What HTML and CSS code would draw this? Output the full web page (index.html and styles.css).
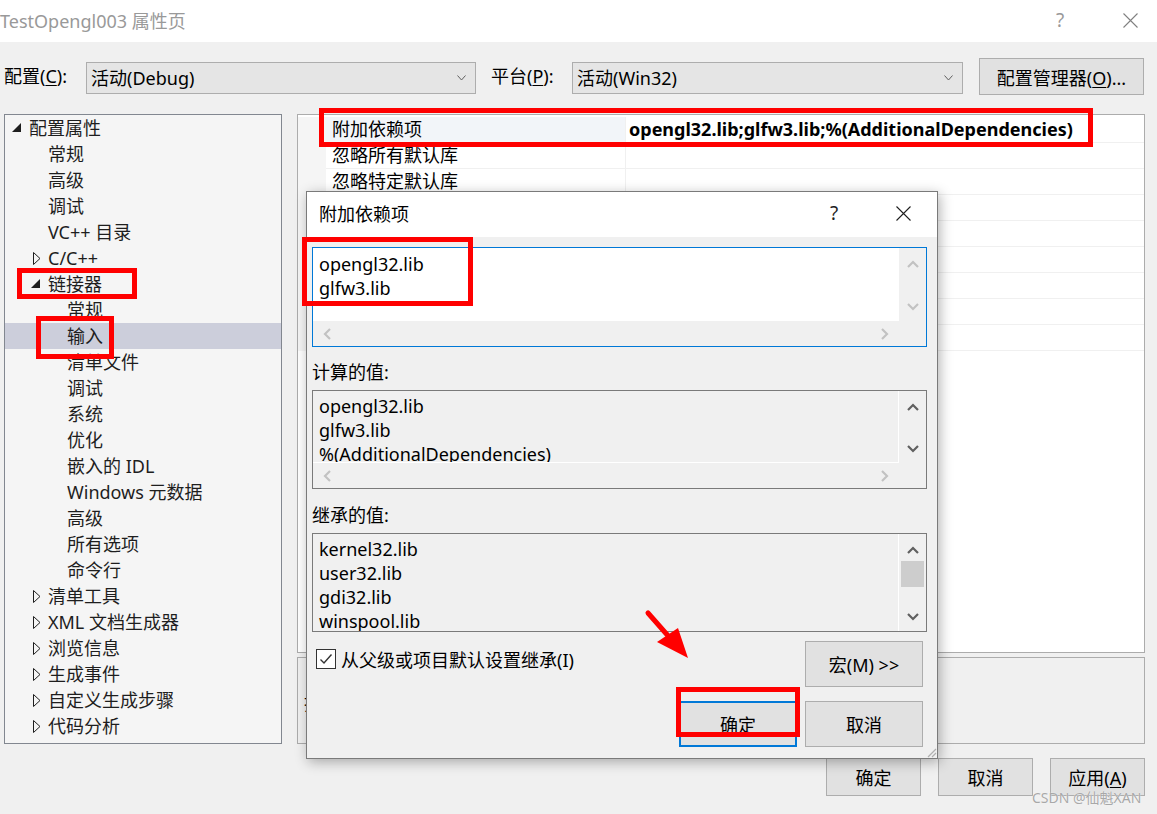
FILE: index.html
```html
<!DOCTYPE html>
<html lang="zh-CN">
<head>
    <meta charset="UTF-8">
    <title>TestOpengl003 属性页</title>
    <link rel="stylesheet" href="styles.css">
</head>
<body>
    <div class="titlebar">
        <span class="title">TestOpengl003 属性页</span>
        <span class="tb-help">?</span>
        <span class="tb-close">
            <svg width="15" height="15" viewBox="0 0 15 15"><path d="M0.5 0.5L14.5 14.5M14.5 0.5L0.5 14.5" stroke="#808080" stroke-width="1.1" fill="none"/></svg>
        </span>
    </div>

    <div class="config-row">
        <span class="cfg-label">配置(<u>C</u>):</span>
        <div class="combo combo-config">
            <span>活动(Debug)</span>
            <svg width="9" height="6" viewBox="0 0 9 6"><path d="M0.5 0.5L4.5 5L8.5 0.5" stroke="#606060" stroke-width="1" fill="none"/></svg>
        </div>
        <span class="cfg-label second">平台(<u>P</u>):</span>
        <div class="combo combo-platform">
            <span>活动(Win32)</span>
            <svg width="9" height="6" viewBox="0 0 9 6"><path d="M0.5 0.5L4.5 5L8.5 0.5" stroke="#606060" stroke-width="1" fill="none"/></svg>
        </div>
        <button class="btn btn-manager">配置管理器(<u>O</u>)...</button>
    </div>

    <div class="main">
        <div class="tree">
            <div class="row l0"><span class="exp"><svg width="9" height="9" viewBox="0 0 9 9"><polygon points="9,0 9,9 0,9" fill="#1e1e1e"/></svg></span>配置属性</div>
            <div class="row l1"><span class="exp"></span>常规</div>
            <div class="row l1"><span class="exp"></span>高级</div>
            <div class="row l1"><span class="exp"></span>调试</div>
            <div class="row l1"><span class="exp"></span>VC++ 目录</div>
            <div class="row l1"><span class="exp"><svg class="closed" width="8" height="13" viewBox="0 0 8 13"><polygon points="0.5,0.5 7,6.5 0.5,12.5" fill="none" stroke="#1e1e1e" stroke-width="1"/></svg></span>C/C++</div>
            <div class="row l1"><span class="exp"><svg width="9" height="9" viewBox="0 0 9 9"><polygon points="9,0 9,9 0,9" fill="#1e1e1e"/></svg></span>链接器</div>
            <div class="row l2"><span class="exp"></span>常规</div>
            <div class="row l2 selected"><span class="exp"></span>输入</div>
            <div class="row l2"><span class="exp"></span>清单文件</div>
            <div class="row l2"><span class="exp"></span>调试</div>
            <div class="row l2"><span class="exp"></span>系统</div>
            <div class="row l2"><span class="exp"></span>优化</div>
            <div class="row l2"><span class="exp"></span>嵌入的 IDL</div>
            <div class="row l2"><span class="exp"></span>Windows 元数据</div>
            <div class="row l2"><span class="exp"></span>高级</div>
            <div class="row l2"><span class="exp"></span>所有选项</div>
            <div class="row l2"><span class="exp"></span>命令行</div>
            <div class="row l1"><span class="exp"><svg class="closed" width="8" height="13" viewBox="0 0 8 13"><polygon points="0.5,0.5 7,6.5 0.5,12.5" fill="none" stroke="#1e1e1e" stroke-width="1"/></svg></span>清单工具</div>
            <div class="row l1"><span class="exp"><svg class="closed" width="8" height="13" viewBox="0 0 8 13"><polygon points="0.5,0.5 7,6.5 0.5,12.5" fill="none" stroke="#1e1e1e" stroke-width="1"/></svg></span>XML 文档生成器</div>
            <div class="row l1"><span class="exp"><svg class="closed" width="8" height="13" viewBox="0 0 8 13"><polygon points="0.5,0.5 7,6.5 0.5,12.5" fill="none" stroke="#1e1e1e" stroke-width="1"/></svg></span>浏览信息</div>
            <div class="row l1"><span class="exp"><svg class="closed" width="8" height="13" viewBox="0 0 8 13"><polygon points="0.5,0.5 7,6.5 0.5,12.5" fill="none" stroke="#1e1e1e" stroke-width="1"/></svg></span>生成事件</div>
            <div class="row l1"><span class="exp"><svg class="closed" width="8" height="13" viewBox="0 0 8 13"><polygon points="0.5,0.5 7,6.5 0.5,12.5" fill="none" stroke="#1e1e1e" stroke-width="1"/></svg></span>自定义生成步骤</div>
            <div class="row l1"><span class="exp"><svg class="closed" width="8" height="13" viewBox="0 0 8 13"><polygon points="0.5,0.5 7,6.5 0.5,12.5" fill="none" stroke="#1e1e1e" stroke-width="1"/></svg></span>代码分析</div>
        </div>

        <div class="right">
            <div class="grid">
                <div class="prop active"><span class="gutter"></span><span class="name">附加依赖项</span><span class="value">opengl32.lib;glfw3.lib;%(AdditionalDependencies)</span></div>
                <div class="prop"><span class="gutter"></span><span class="name">忽略所有默认库</span><span class="value"></span></div>
                <div class="prop"><span class="gutter"></span><span class="name">忽略特定默认库</span><span class="value"></span></div>
                <div class="prop"><span class="gutter"></span><span class="name">模块定义文件</span><span class="value"></span></div>
                <div class="prop"><span class="gutter"></span><span class="name">将模块添加到程序集</span><span class="value"></span></div>
                <div class="prop"><span class="gutter"></span><span class="name">嵌入托管资源文件</span><span class="value"></span></div>
                <div class="prop"><span class="gutter"></span><span class="name">强制符号引用</span><span class="value"></span></div>
                <div class="prop"><span class="gutter"></span><span class="name">延迟加载的 DLL</span><span class="value"></span></div>
                <div class="prop"><span class="gutter"></span><span class="name">程序集链接资源</span><span class="value"></span></div>
            </div>
            <div class="desc">
                <div class="desc-title">附加依赖项</div>
                <div class="desc-text">指定要添加到链接命令行的附加项。[例如 kernel32.lib]</div>
            </div>
        </div>
    </div>

    <div class="footer">
        <button class="btn">确定</button>
        <button class="btn">取消</button>
        <button class="btn">应用(<u>A</u>)</button>
    </div>

    <!-- 附加依赖项 dialog on top -->
    <div class="dialog">
        <div class="dlg-title">
            <span class="dlg-caption">附加依赖项</span>
            <span class="dlg-help">?</span>
            <span class="dlg-close">
                <svg width="15" height="15" viewBox="0 0 15 15"><path d="M0.5 0.5L14.5 14.5M14.5 0.5L0.5 14.5" stroke="#1e1e1e" stroke-width="1.1" fill="none"/></svg>
            </span>
        </div>
        <div class="dlg-body">
            <div class="textbox focused with-h">
                <div class="tb-text edit">opengl32.lib<br>glfw3.lib</div>
                <div class="vscroll">
                    <svg width="12" height="8" viewBox="0 0 12 8"><path d="M1 7L6 2L11 7" stroke="#c2c2c2" stroke-width="2.2" fill="none"/></svg>
                    <svg width="12" height="8" viewBox="0 0 12 8"><path d="M1 1L6 6L11 1" stroke="#c2c2c2" stroke-width="2.2" fill="none"/></svg>
                </div>
                <div class="hscroll">
                    <svg width="8" height="12" viewBox="0 0 8 12"><path d="M7 1L2 6L7 11" stroke="#c2c2c2" stroke-width="2.2" fill="none"/></svg>
                    <svg width="8" height="12" viewBox="0 0 8 12"><path d="M1 1L6 6L1 11" stroke="#c2c2c2" stroke-width="2.2" fill="none"/></svg>
                </div>
                <div class="corner"></div>
            </div>

            <div class="dlg-label">计算的值:</div>
            <div class="textbox with-h">
                <div class="tb-text">opengl32.lib<br>glfw3.lib<br>%(AdditionalDependencies)</div>
                <div class="vscroll">
                    <svg width="12" height="8" viewBox="0 0 12 8"><path d="M1 7L6 2L11 7" stroke="#606060" stroke-width="2.2" fill="none"/></svg>
                    <svg width="12" height="8" viewBox="0 0 12 8"><path d="M1 1L6 6L11 1" stroke="#606060" stroke-width="2.2" fill="none"/></svg>
                </div>
                <div class="hscroll">
                    <svg width="8" height="12" viewBox="0 0 8 12"><path d="M7 1L2 6L7 11" stroke="#c2c2c2" stroke-width="2.2" fill="none"/></svg>
                    <svg width="8" height="12" viewBox="0 0 8 12"><path d="M1 1L6 6L1 11" stroke="#c2c2c2" stroke-width="2.2" fill="none"/></svg>
                </div>
                <div class="corner"></div>
            </div>

            <div class="dlg-label">继承的值:</div>
            <div class="textbox">
                <div class="tb-text">kernel32.lib<br>user32.lib<br>gdi32.lib<br>winspool.lib<br>comdlg32.lib</div>
                <div class="vscroll">
                    <svg width="12" height="8" viewBox="0 0 12 8"><path d="M1 7L6 2L11 7" stroke="#606060" stroke-width="2.2" fill="none"/></svg>
                    <div class="thumb"></div>
                    <div class="spacer"></div>
                    <svg width="12" height="8" viewBox="0 0 12 8"><path d="M1 1L6 6L11 1" stroke="#606060" stroke-width="2.2" fill="none"/></svg>
                </div>
            </div>

            <div class="dlg-row">
                <label class="check">
                    <span class="box"><svg width="14" height="12" viewBox="0 0 14 12"><path d="M1.5 6.5L5 10L12.5 1.5" stroke="#333" stroke-width="1.4" fill="none"/></svg></span>
                    从父级或项目默认设置继承(I)
                </label>
                <button class="btn dlg-btn">宏(M) &gt;&gt;</button>
            </div>
            <div class="dlg-row buttons">
                <button class="btn dlg-btn default">确定</button>
                <button class="btn dlg-btn">取消</button>
            </div>
        </div>
        <svg class="grip" width="12" height="12" viewBox="0 0 12 12"><path d="M11 3L3 11M11 7L7 11M11 11L11 11" stroke="#b0b0b0" stroke-width="1.2"/></svg>
    </div>

    <!-- annotations -->
    <div class="mark mark-grid"></div>
    <div class="mark mark-edit"></div>
    <div class="mark mark-linker"></div>
    <div class="mark mark-input"></div>
    <div class="mark mark-ok"></div>
    <svg class="arrow" width="60" height="60" viewBox="0 0 60 60">
        <path d="M8 8L30 33" stroke="#ff0000" stroke-width="5" stroke-linecap="round"/>
        <polygon points="48,53 17,37 38,23" fill="#ff0000"/>
    </svg>

    <div class="watermark">CSDN @仙魁XAN</div>
</body>
</html>
```

FILE: styles.css
```css
* {
    box-sizing: border-box;
}
body {
    margin: 0;
    width: 1157px;
    height: 814px;
    overflow: hidden;
    position: relative;
    background: #f0f0f0;
    font-family: "Noto Sans", "Noto Sans CJK SC", sans-serif;
    font-size: 18px;
    color: #000;
}
u {
    text-decoration-thickness: 1px;
    text-underline-offset: 2px;
}
.btn {
    font-family: inherit;
    font-size: 18px;
    color: #000;
    background: #e1e1e1;
    border: 1px solid #adadad;
    padding: 0;
    height: 38px;
    width: 95px;
}

/* title bar */
.titlebar {
    height: 42px;
    background: #fff;
    display: flex;
    align-items: center;
}
.title {
    flex: 1;
    color: #999;
    margin-top: -3px;
}
.tb-help {
    width: 30px;
    text-align: center;
    color: #999;
    font-size: 19px;
    margin-right: 40px;
    margin-top: -3px;
}
.tb-close {
    width: 30px;
    display: flex;
    justify-content: center;
    margin-right: 12px;
    margin-top: -2px;
}

/* configuration row */
.config-row {
    display: flex;
    align-items: flex-start;
    height: 53px;
    padding: 16px 0 0 4px;
}
.cfg-label {
    width: 82px;
    line-height: 37px;
}
.cfg-label.second {
    width: 81px;
    margin-left: 15px;
}
.combo {
    margin-top: 4px;
    height: 32px;
    border: 1px solid #adadad;
    background: #e5e5e5;
    display: flex;
    align-items: center;
    justify-content: space-between;
    padding: 0 9px 2px 4px;
}
.combo svg {
    margin-top: 2px;
}
.combo-config {
    width: 390px;
}
.combo-platform {
    width: 391px;
}
.btn-manager {
    margin-left: 16px;
    width: 165px;
    height: 37px;
}

/* tree + grid */
.main {
    display: flex;
    height: 630px;
    margin-top: 19px;
    padding-left: 4px;
}
.tree {
    width: 278px;
    border: 1px solid #828790;
    background: #f5f5f5;
}
.row {
    height: 26px;
    line-height: 26px;
    display: flex;
    align-items: center;
    white-space: nowrap;
    color: #1e1e1e;
}
.row.l0 {
    padding-left: 7px;
}
.row.l1 {
    padding-left: 26px;
}
.row.l2 {
    padding-left: 45px;
}
.row.selected {
    background: #cccedb;
}
.exp {
    width: 17px;
    display: flex;
    align-items: center;
}
.exp svg {
    margin-top: -2px;
}
.exp .closed {
    margin-left: 2px;
    margin-top: 0;
}
.right {
    width: 848px;
    margin-left: 15px;
    display: flex;
    flex-direction: column;
}
.grid {
    height: 539px;
    border: 1px solid #acacac;
    background: #fff;
    padding-top: 2px;
}
.prop {
    display: flex;
    height: 26px;
    line-height: 25px;
}
.gutter {
    width: 28px;
    background: #f5f5f5;
}
.name {
    width: 300px;
    padding-left: 6px;
    border-right: 1px solid #f0f0f0;
    border-bottom: 1px solid #f0f0f0;
    white-space: nowrap;
}
.value {
    flex: 1;
    padding-left: 3px;
    border-bottom: 1px solid #f0f0f0;
    font-weight: bold;
    white-space: nowrap;
}
.prop.active .name {
    background: #f2f5f9;
}
.desc {
    margin-top: 4px;
    flex: 1;
    border: 1px solid #acacac;
    background: #f0f0f0;
    padding: 6px 0 0 12px;
    line-height: 26px;
}
.desc-title {
    font-weight: bold;
}
.desc-text {
    margin-left: -6px;
}

.footer {
    display: flex;
    justify-content: flex-end;
    gap: 17px;
    padding-right: 12px;
    margin-top: 14px;
}

/* dialog */
.dialog {
    position: absolute;
    left: 306px;
    top: 191px;
    width: 632px;
    height: 568px;
    border: 1px solid #7a7a7a;
    background: #f0f0f0;
    box-shadow: 2px 3px 12px rgba(0, 0, 0, 0.3);
}
.dlg-title {
    height: 45px;
    background: #fff;
    display: flex;
    align-items: center;
}
.dlg-caption {
    flex: 1;
    padding-left: 12px;
    margin-top: -3px;
}
.dlg-help {
    width: 30px;
    text-align: center;
    font-size: 19px;
    color: #1e1e1e;
    margin-right: 39px;
    margin-top: -3px;
}
.dlg-close {
    width: 30px;
    display: flex;
    justify-content: center;
    margin-right: 19px;
    margin-top: -2px;
}
.dlg-body {
    padding: 10px 10px 0 5px;
}
.textbox {
    height: 99px;
    border: 1px solid #7a7a7a;
    display: grid;
    grid-template-columns: 1fr 27px;
    grid-template-rows: 1fr;
}
.textbox.with-h {
    grid-template-rows: 1fr 25px;
}
.textbox.focused {
    height: 100px;
    border-color: #0078d7;
}
.tb-text {
    padding: 3px 0 0 6px;
    line-height: 24px;
    overflow: hidden;
    border-right: 1px solid #fff;
    border-bottom: 1px solid #fff;
}
.tb-text.edit {
    background: #fff;
    padding-top: 4px;
}
.textbox:not(.with-h) .tb-text {
    border-bottom: none;
}
.vscroll {
    display: flex;
    flex-direction: column;
    justify-content: space-between;
    align-items: center;
    padding: 12px 0 10px;
}
.thumb {
    width: 23px;
    height: 26px;
    margin-top: 7px;
    background: #cdcdcd;
}
.spacer {
    flex: 1;
}
.hscroll {
    display: flex;
    justify-content: space-between;
    align-items: center;
    padding: 0 10px;
}
.dlg-label {
    margin-top: 12px;
    margin-bottom: 5px;
    line-height: 26px;
}
.dlg-label + .textbox + .dlg-label {
    margin-top: 13px;
}
.dlg-row {
    display: flex;
    justify-content: space-between;
    align-items: center;
    margin-top: 9px;
    padding-right: 4px;
}
.dlg-row.buttons {
    justify-content: flex-end;
    gap: 8px;
    margin-top: 14px;
}
.check {
    display: flex;
    align-items: center;
    gap: 5px;
    padding-left: 4px;
    margin-top: -10px;
}
.box {
    width: 20px;
    height: 20px;
    border: 1px solid #333;
    background: #fff;
    display: flex;
    align-items: center;
    justify-content: center;
}
.dlg-btn {
    width: 118px;
    height: 46px;
}
.dlg-btn.default {
    border: 2px solid #0078d7;
}
.grip {
    position: absolute;
    right: 0;
    bottom: 0;
}

/* red annotation marks */
.mark {
    position: absolute;
    border: 5px solid #ff0000;
}
.mark-grid {
    left: 319px;
    top: 108px;
    width: 774px;
    height: 39px;
}
.mark-edit {
    left: 302px;
    top: 237px;
    width: 171px;
    height: 69px;
}
.mark-linker {
    left: 17px;
    top: 268px;
    width: 120px;
    height: 31px;
}
.mark-input {
    left: 36px;
    top: 316px;
    width: 78px;
    height: 43px;
}
.mark-ok {
    left: 676px;
    top: 687px;
    width: 124px;
    height: 50px;
}
.arrow {
    position: absolute;
    left: 640px;
    top: 605px;
}
.watermark {
    position: absolute;
    left: 1032px;
    top: 787px;
    font-size: 14px;
    color: #a8a8a8;
    text-shadow: 0 0 1px #fff;
    white-space: nowrap;
}
```
